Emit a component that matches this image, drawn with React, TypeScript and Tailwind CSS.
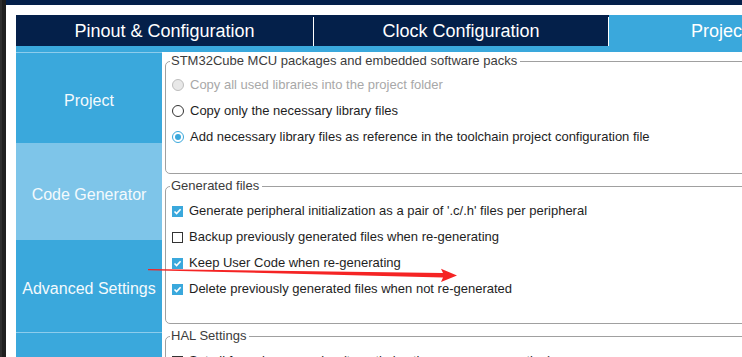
import React from "react";

const font = { fontFamily: '"Liberation Sans", Arial, sans-serif' };

function Radio({ state }: { state: "disabled" | "off" | "on" }) {
  if (state === "disabled")
    return <span className="h-[12px] w-[12px] shrink-0 rounded-full border border-[#bdbdbd] bg-[#e8e8e8]" />;
  if (state === "off")
    return <span className="h-[12px] w-[12px] shrink-0 rounded-full border border-[#333333] bg-white" />;
  return (
    <span className="flex h-[12px] w-[12px] shrink-0 items-center justify-center rounded-full border border-[#3aa8dc] bg-white">
      <span className="h-[6px] w-[6px] rounded-full bg-[#3aa8dc]" />
    </span>
  );
}

function Check({ on }: { on: boolean }) {
  if (!on) return <span className="h-[11px] w-[11px] shrink-0 border border-[#333333] bg-white" />;
  return (
    <span className="flex h-[11px] w-[11px] shrink-0 items-center justify-center bg-[#3aa8dc]">
      <svg width="9" height="9" viewBox="0 0 9 9">
        <polyline points="1.5,4.5 3.6,6.6 7.6,2.2" fill="none" stroke="#fff" strokeWidth="1.6" />
      </svg>
    </span>
  );
}

function Row({ control, text, muted }: { control: React.ReactNode; text: string; muted?: boolean }) {
  return (
    <div className="flex h-[26px] items-center gap-[6px]">
      {control}
      <span className={"whitespace-nowrap text-[13px] " + (muted ? "text-[#a8a8a8]" : "text-[#1e1e1e]")}>{text}</span>
    </div>
  );
}

function Legend({ children }: { children: React.ReactNode }) {
  return (
    <legend className="ml-[-2px] px-[1px] pr-[3px] text-[13px] leading-[16px] text-[#3c3c3c]">{children}</legend>
  );
}

const sideItems = [
  { label: "Project", h: "h-[90px]", active: false },
  { label: "Code Generator", h: "h-[95px]", active: true },
  { label: "Advanced Settings", h: "h-[92px]", active: false },
];

export default function App() {
  return (
    <div className="relative flex h-[357px] w-[742px] overflow-hidden bg-white" style={font}>
      <div className="flex h-full w-[6px] shrink-0">
        <div className="w-[2px] bg-[#2e2e2e]" />
        <div className="w-[4px] bg-[#1f1f1f]" />
      </div>

      <div className="flex min-w-0 flex-1 flex-col">
        <div className="h-[5px] bg-[#04204a]" />
        <div className="flex min-h-0 flex-1 flex-col pl-[10px] pt-[10px]">
          <div className="flex h-[31px] shrink-0 bg-[#04204a] pt-[2px] text-[18px] text-white">
            <div className="flex w-[298px] shrink-0 items-center justify-center border-r border-white">
              Pinout &amp; Configuration
            </div>
            <div className="flex w-[295px] shrink-0 items-center justify-center border-r border-white">
              Clock Configuration
            </div>
            <div className="-mt-[2px] flex w-[296px] shrink-0 items-center justify-center whitespace-nowrap bg-[#3aa8dc] pt-[2px]">
              Project Manager
            </div>
          </div>
          <div className="h-[6px] shrink-0 bg-[#3aa8dc]" />

          <div className="flex min-h-0 flex-1">
            <div className="flex w-[146px] shrink-0 flex-col bg-[#3aa8dc] text-[16px] text-[#f4fafd]">
              <div className="h-[1px] bg-[#8dccec]" />
              {sideItems.map((s, i) => (
                <React.Fragment key={s.label}>
                  <div
                    className={
                      "flex shrink-0 items-center justify-center whitespace-nowrap pt-[5px] " +
                      s.h +
                      (s.active ? " bg-[#7ec5e9]" : "")
                    }
                  >
                    {s.label}
                  </div>
                  {i === 0 && <div className="h-[2px] bg-[#7ec5e9]" />}
                </React.Fragment>
              ))}
              <div className="h-[1px] bg-[#8dccec]" />
            </div>

            <div className="w-[620px] shrink-0 pl-[3px]">
              <fieldset className="mt-[1px] rounded-[5px] border border-[#a0a0a0] pb-[23px] pl-[6px]">
                <Legend>STM32Cube MCU packages and embedded software packs</Legend>
                <div className="pt-[3px]">
                  <Row control={<Radio state="disabled" />} text="Copy all used libraries into the project folder" muted />
                  <Row control={<Radio state="off" />} text="Copy only the necessary library files" />
                  <Row
                    control={<Radio state="on" />}
                    text="Add necessary library files as reference in the toolchain project configuration file"
                  />
                </div>
              </fieldset>

              <fieldset className="mt-[4px] rounded-[5px] border border-[#a0a0a0] pb-[21px] pl-[6px]">
                <Legend>Generated files</Legend>
                <div className="pt-[4px]">
                  <Row control={<Check on />} text="Generate peripheral initialization as a pair of '.c/.h' files per peripheral" />
                  <Row control={<Check on={false} />} text="Backup previously generated files when re-generating" />
                  <Row control={<Check on />} text="Keep User Code when re-generating" />
                  <Row control={<Check on />} text="Delete previously generated files when not re-generated" />
                </div>
              </fieldset>

              <fieldset className="mt-[4px] rounded-[5px] border border-[#a0a0a0] pb-[20px] pl-[6px]">
                <Legend>HAL Settings</Legend>
                <div className="pt-[4px]">
                  <Row control={<Check on={false} />} text="Set all free pins as analog (to optimize the power consumption)" />
                </div>
              </fieldset>
            </div>
          </div>
        </div>
      </div>

      <svg className="pointer-events-none absolute left-0 top-0" width="742" height="357" viewBox="0 0 742 357">
        <polygon
          points="148,269 443,273 441,268.7 457,275.5 441,282 443,277.5 148,270.2"
          fill="#f52424"
        />
      </svg>
    </div>
  );
}
